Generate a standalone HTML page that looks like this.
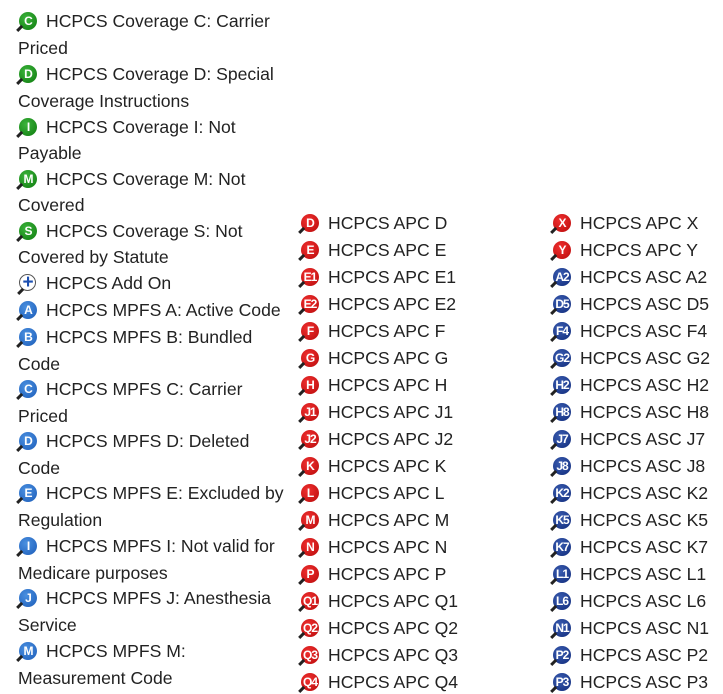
<!DOCTYPE html>
<html><head><meta charset="utf-8"><style>
body{margin:0;width:723px;height:693px;background:#fff;position:relative;overflow:hidden;font-family:"Liberation Sans",sans-serif;font-size:17.6px;color:#222}
.l{position:absolute;height:24px;line-height:24px;white-space:nowrap}
.i{position:absolute;width:18px;height:18px;border-radius:50%;color:#fff;font-weight:bold;font-size:12px;line-height:18px;text-align:center;top:3px;letter-spacing:-1px}
.i::after{content:"";position:absolute;left:-3px;top:15px;width:7px;height:2.5px;background:#222;transform:rotate(-45deg)}
.g{background:radial-gradient(circle at 40% 35%,#3cb43c,#0d7a0d)}
.r{background:radial-gradient(circle at 40% 35%,#f03030,#b80a0a)}
.b{background:radial-gradient(circle at 40% 35%,#4a90e0,#1c5cb8)}
.n{background:radial-gradient(circle at 40% 35%,#3a5cb0,#0f2a7a)}
.p{background:#fff;border:1.5px solid #555;width:15px;height:15px;color:#1c4fb0;font-size:19px;line-height:15px}
</style></head><body>
<div class="l" style="top:9px;left:19px"><span class="i g">C</span><span style="margin-left:27px">HCPCS Coverage C: Carrier</span></div>
<div class="l" style="top:36px;left:18px">Priced</div>
<div class="l" style="top:62px;left:19px"><span class="i g">D</span><span style="margin-left:27px">HCPCS Coverage D: Special</span></div>
<div class="l" style="top:89px;left:18px">Coverage Instructions</div>
<div class="l" style="top:115px;left:19px"><span class="i g">I</span><span style="margin-left:27px">HCPCS Coverage I: Not</span></div>
<div class="l" style="top:141px;left:18px">Payable</div>
<div class="l" style="top:167px;left:19px"><span class="i g">M</span><span style="margin-left:27px">HCPCS Coverage M: Not</span></div>
<div class="l" style="top:193px;left:18px">Covered</div>
<div class="l" style="top:219px;left:19px"><span class="i g">S</span><span style="margin-left:27px">HCPCS Coverage S: Not</span></div>
<div class="l" style="top:245px;left:18px">Covered by Statute</div>
<div class="l" style="top:271px;left:19px"><span class="i p">+</span><span style="margin-left:27px">HCPCS Add On</span></div>
<div class="l" style="top:298px;left:19px"><span class="i b">A</span><span style="margin-left:27px">HCPCS MPFS A: Active Code</span></div>
<div class="l" style="top:325px;left:19px"><span class="i b">B</span><span style="margin-left:27px">HCPCS MPFS B: Bundled</span></div>
<div class="l" style="top:352px;left:18px">Code</div>
<div class="l" style="top:377px;left:19px"><span class="i b">C</span><span style="margin-left:27px">HCPCS MPFS C: Carrier</span></div>
<div class="l" style="top:404px;left:18px">Priced</div>
<div class="l" style="top:429px;left:19px"><span class="i b">D</span><span style="margin-left:27px">HCPCS MPFS D: Deleted</span></div>
<div class="l" style="top:456px;left:18px">Code</div>
<div class="l" style="top:481px;left:19px"><span class="i b">E</span><span style="margin-left:27px">HCPCS MPFS E: Excluded by</span></div>
<div class="l" style="top:508px;left:18px">Regulation</div>
<div class="l" style="top:534px;left:19px"><span class="i b">I</span><span style="margin-left:27px">HCPCS MPFS I: Not valid for</span></div>
<div class="l" style="top:561px;left:18px">Medicare purposes</div>
<div class="l" style="top:586px;left:19px"><span class="i b">J</span><span style="margin-left:27px">HCPCS MPFS J: Anesthesia</span></div>
<div class="l" style="top:613px;left:18px">Service</div>
<div class="l" style="top:639px;left:19px"><span class="i b">M</span><span style="margin-left:27px">HCPCS MPFS M:</span></div>
<div class="l" style="top:666px;left:18px">Measurement Code</div>
<div class="l" style="top:211px;left:301px"><span class="i r">D</span><span style="margin-left:27px">HCPCS APC D</span></div>
<div class="l" style="top:238px;left:301px"><span class="i r">E</span><span style="margin-left:27px">HCPCS APC E</span></div>
<div class="l" style="top:265px;left:301px"><span class="i r">E1</span><span style="margin-left:27px">HCPCS APC E1</span></div>
<div class="l" style="top:292px;left:301px"><span class="i r">E2</span><span style="margin-left:27px">HCPCS APC E2</span></div>
<div class="l" style="top:319px;left:301px"><span class="i r">F</span><span style="margin-left:27px">HCPCS APC F</span></div>
<div class="l" style="top:346px;left:301px"><span class="i r">G</span><span style="margin-left:27px">HCPCS APC G</span></div>
<div class="l" style="top:373px;left:301px"><span class="i r">H</span><span style="margin-left:27px">HCPCS APC H</span></div>
<div class="l" style="top:400px;left:301px"><span class="i r">J1</span><span style="margin-left:27px">HCPCS APC J1</span></div>
<div class="l" style="top:427px;left:301px"><span class="i r">J2</span><span style="margin-left:27px">HCPCS APC J2</span></div>
<div class="l" style="top:454px;left:301px"><span class="i r">K</span><span style="margin-left:27px">HCPCS APC K</span></div>
<div class="l" style="top:481px;left:301px"><span class="i r">L</span><span style="margin-left:27px">HCPCS APC L</span></div>
<div class="l" style="top:508px;left:301px"><span class="i r">M</span><span style="margin-left:27px">HCPCS APC M</span></div>
<div class="l" style="top:535px;left:301px"><span class="i r">N</span><span style="margin-left:27px">HCPCS APC N</span></div>
<div class="l" style="top:562px;left:301px"><span class="i r">P</span><span style="margin-left:27px">HCPCS APC P</span></div>
<div class="l" style="top:589px;left:301px"><span class="i r">Q1</span><span style="margin-left:27px">HCPCS APC Q1</span></div>
<div class="l" style="top:616px;left:301px"><span class="i r">Q2</span><span style="margin-left:27px">HCPCS APC Q2</span></div>
<div class="l" style="top:643px;left:301px"><span class="i r">Q3</span><span style="margin-left:27px">HCPCS APC Q3</span></div>
<div class="l" style="top:670px;left:301px"><span class="i r">Q4</span><span style="margin-left:27px">HCPCS APC Q4</span></div>
<div class="l" style="top:211px;left:553px"><span class="i r">X</span><span style="margin-left:27px">HCPCS APC X</span></div>
<div class="l" style="top:238px;left:553px"><span class="i r">Y</span><span style="margin-left:27px">HCPCS APC Y</span></div>
<div class="l" style="top:265px;left:553px"><span class="i n">A2</span><span style="margin-left:27px">HCPCS ASC A2</span></div>
<div class="l" style="top:292px;left:553px"><span class="i n">D5</span><span style="margin-left:27px">HCPCS ASC D5</span></div>
<div class="l" style="top:319px;left:553px"><span class="i n">F4</span><span style="margin-left:27px">HCPCS ASC F4</span></div>
<div class="l" style="top:346px;left:553px"><span class="i n">G2</span><span style="margin-left:27px">HCPCS ASC G2</span></div>
<div class="l" style="top:373px;left:553px"><span class="i n">H2</span><span style="margin-left:27px">HCPCS ASC H2</span></div>
<div class="l" style="top:400px;left:553px"><span class="i n">H8</span><span style="margin-left:27px">HCPCS ASC H8</span></div>
<div class="l" style="top:427px;left:553px"><span class="i n">J7</span><span style="margin-left:27px">HCPCS ASC J7</span></div>
<div class="l" style="top:454px;left:553px"><span class="i n">J8</span><span style="margin-left:27px">HCPCS ASC J8</span></div>
<div class="l" style="top:481px;left:553px"><span class="i n">K2</span><span style="margin-left:27px">HCPCS ASC K2</span></div>
<div class="l" style="top:508px;left:553px"><span class="i n">K5</span><span style="margin-left:27px">HCPCS ASC K5</span></div>
<div class="l" style="top:535px;left:553px"><span class="i n">K7</span><span style="margin-left:27px">HCPCS ASC K7</span></div>
<div class="l" style="top:562px;left:553px"><span class="i n">L1</span><span style="margin-left:27px">HCPCS ASC L1</span></div>
<div class="l" style="top:589px;left:553px"><span class="i n">L6</span><span style="margin-left:27px">HCPCS ASC L6</span></div>
<div class="l" style="top:616px;left:553px"><span class="i n">N1</span><span style="margin-left:27px">HCPCS ASC N1</span></div>
<div class="l" style="top:643px;left:553px"><span class="i n">P2</span><span style="margin-left:27px">HCPCS ASC P2</span></div>
<div class="l" style="top:670px;left:553px"><span class="i n">P3</span><span style="margin-left:27px">HCPCS ASC P3</span></div>
</body></html>
